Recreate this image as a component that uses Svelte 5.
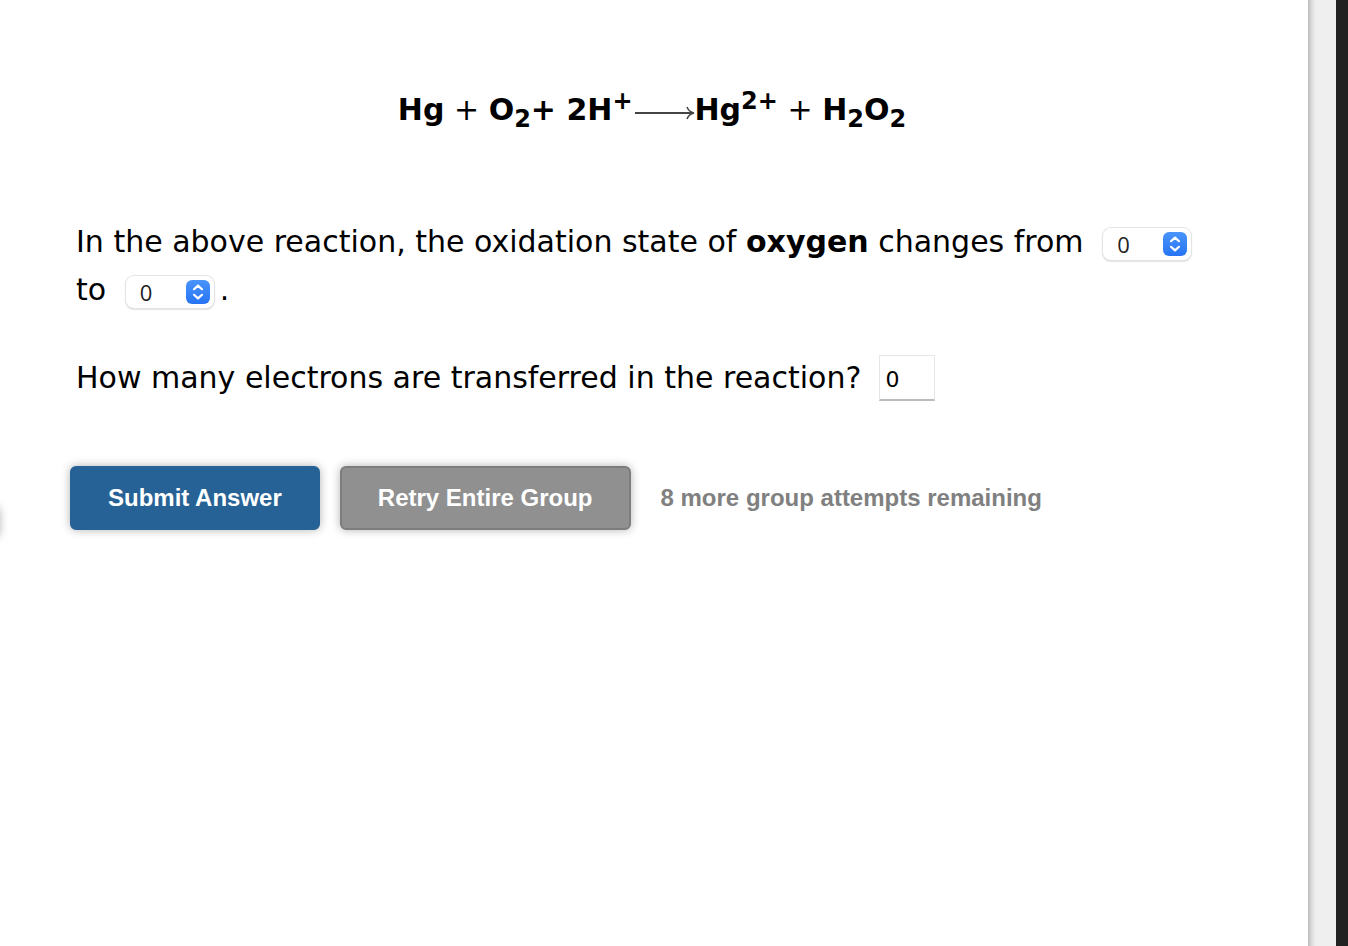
<script>
  const states = ['-2', '-1', '0', '+1', '+2'];
  let from = $state('0');
  let to = $state('0');
  let electrons = $state('0');
</script>

{#snippet stepper()}
  <svg class="stepper" viewBox="0 0 24 24" aria-hidden="true">
    <defs>
      <linearGradient id="blue" x1="0" y1="0" x2="0" y2="1">
        <stop offset="0" stop-color="#4a94fa" />
        <stop offset="1" stop-color="#2674f5" />
      </linearGradient>
    </defs>
    <rect width="24" height="24" rx="6" fill="url(#blue)" />
    <path d="M8 9.2 12 5.6 16 9.2M8 14.8 12 18.4 16 14.8" fill="none" stroke="#fff" stroke-width="2.2" stroke-linecap="round" stroke-linejoin="round" />
  </svg>
{/snippet}

<div class="page">
  <main>
    <div class="equation">
      <b>Hg</b> + <b>O<sub>2</sub>+ 2H<sup>+</sup></b><svg class="arrow" viewBox="0 0 62 16" role="img" aria-label="yields"><path d="M2 8H60" fill="none" stroke="#444" stroke-width="2" /><path d="M54 2Q56 7 61 8Q56 9 54 14" fill="none" stroke="#444" stroke-width="1.5" /></svg><b>Hg<sup>2+</sup></b> + <b>H<sub>2</sub>O<sub>2</sub></b>
    </div>

    <p class="question">
      In the above reaction, the oxidation state of <b>oxygen</b> changes from
      <span class="picker">
        <select bind:value={from} aria-label="Initial oxidation state">
          {#each states as s}<option>{s}</option>{/each}
        </select>
        {@render stepper()}
      </span>
      to
      <span class="picker">
        <select bind:value={to} aria-label="Final oxidation state">
          {#each states as s}<option>{s}</option>{/each}
        </select>
        {@render stepper()}
      </span>.
    </p>

    <p class="question count">
      <label for="electrons">How many electrons are transferred in the reaction?</label>
      <input id="electrons" type="text" bind:value={electrons} />
    </p>

    <div class="actions">
      <button type="button" class="submit">Submit Answer</button>
      <button type="button" class="retry">Retry Entire Group</button>
      <span class="remaining">8 more group attempts remaining</span>
    </div>
    <span class="handle"></span>
  </main>
  <div class="gutter"></div>
  <div class="edge"></div>
</div>

<style>
  :global(body) {
    margin: 0;
    background: #fff;
  }
  .page {
    display: flex;
    min-height: 100vh;
    font-family: Verdana, "DejaVu Sans", sans-serif;
    font-size: 30px;
    color: #000;
  }
  main {
    position: relative;
    flex: 1;
    box-sizing: border-box;
    padding: 86px 70px 0;
    overflow: hidden;
  }
  .gutter {
    width: 28px;
    background: linear-gradient(to right, #bdbdbd, #dedede 4px, #efefef 8px);
  }
  .edge {
    width: 12px;
    background: #222;
  }
  .equation {
    height: 48px;
    padding-right: 4px;
    line-height: 48px;
    text-align: center;
    white-space: nowrap;
  }
  sub,
  sup {
    font-size: 24px;
    line-height: 0;
  }
  .arrow {
    width: 62px;
    height: 16px;
    vertical-align: -1px;
  }
  .question {
    margin: 84px 0 0;
    padding: 0 24px 0 6px;
    line-height: 48px;
  }
  .picker {
    position: relative;
    display: inline-block;
    width: 88px;
    height: 32px;
    margin: 0 6px 0 10px;
    vertical-align: -1px;
    line-height: 32px;
  }
  select {
    display: block;
    box-sizing: border-box;
    width: 100%;
    height: 100%;
    margin: 0;
    padding: 0 30px 0 14px;
    border: 0;
    border-radius: 8px;
    appearance: none;
    background: #fff;
    box-shadow: 0 0 0 1px #e4e4e4, 0 1px 2px rgba(0, 0, 0, 0.35);
    font: 22px "Open Sans", sans-serif;
    color: #222;
  }
  .stepper {
    position: absolute;
    top: 4px;
    right: 4px;
    width: 24px;
    height: 24px;
    pointer-events: none;
  }
  .count {
    display: flex;
    align-items: center;
    gap: 18px;
    margin-top: 40px;
  }
  input {
    box-sizing: border-box;
    width: 56px;
    height: 46px;
    padding: 4px 5px 0;
    border: 1px solid #e6e6e6;
    border-bottom: 2px solid #bbb;
    border-radius: 0;
    background: #fff;
    font: 22px Verdana, "DejaVu Sans", sans-serif;
    color: #000;
  }
  .actions {
    display: flex;
    align-items: center;
    gap: 20px;
    margin-top: 64px;
    font-family: "Liberation Sans", Arial, sans-serif;
    font-size: 24px;
    font-weight: bold;
  }
  button {
    height: 64px;
    padding: 0 36px;
    border: 2px solid #266295;
    border-radius: 6px;
    background: #266295;
    box-shadow: 0 0 10px rgba(0, 0, 0, 0.3);
    font: inherit;
    color: #fff;
    white-space: nowrap;
  }
  .retry {
    border-color: #7d7d7d;
    background: #909090;
  }
  .remaining {
    margin-left: 10px;
    color: #808080;
  }
  .handle {
    position: absolute;
    top: 508px;
    left: -10px;
    width: 8px;
    height: 28px;
    border-radius: 4px;
    box-shadow: 0 0 10px 1px rgba(0, 0, 0, 0.35);
  }
</style>
